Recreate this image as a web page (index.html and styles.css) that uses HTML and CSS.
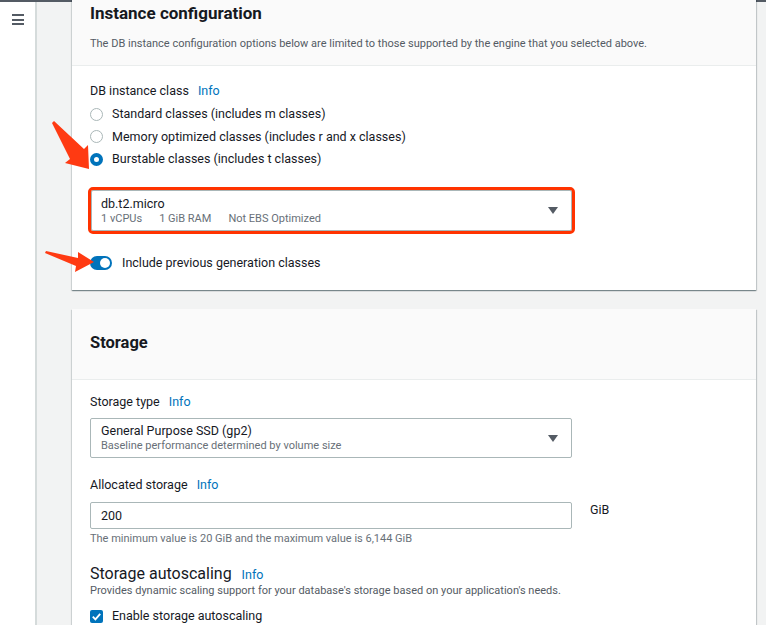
FILE: index.html
```html
<!DOCTYPE html>
<html>
<head>
<meta charset="utf-8">
<link rel="stylesheet" href="styles.css">
</head>
<body>
<div class="topline"></div>
<div class="layout">
  <aside class="sidebar">
    <div class="hamburger"><span></span><span></span><span></span></div>
  </aside>
  <main class="main">
    <section class="card first">
      <header class="card-header hdr1">
        <h2 class="card-title">Instance configuration</h2>
        <p class="card-desc">The DB instance configuration options below are limited to those supported by the engine that you selected above.</p>
      </header>
      <div class="card-body body1">
        <div class="label">DB instance class <a class="info">Info</a></div>
        <div class="radios">
          <label class="radio"><span class="rdot"></span>Standard classes (includes m classes)</label>
          <label class="radio"><span class="rdot"></span>Memory optimized classes (includes r and x classes)</label>
          <label class="radio"><span class="rdot on"></span>Burstable classes (includes t classes)</label>
        </div>
        <div class="select highlighted">
          <div class="sel-text">
            <div class="sel-main">db.t2.micro</div>
            <div class="sel-sub"><span>1 vCPUs</span><span>1 GiB RAM</span><span>Not EBS Optimized</span></div>
          </div>
          <span class="caret"></span>
        </div>
        <div class="toggle-row">
          <span class="toggle"><span class="knob"></span></span>
          <span>Include previous generation classes</span>
        </div>
      </div>
    </section>

    <section class="card second">
      <header class="card-header hdr2">
        <h2 class="card-title t2">Storage</h2>
      </header>
      <div class="card-body body2">
        <div class="label">Storage type <a class="info">Info</a></div>
        <div class="select plain">
          <div class="sel-text">
            <div class="sel-main">General Purpose SSD (gp2)</div>
            <div class="sel-sub">Baseline performance determined by volume size</div>
          </div>
          <span class="caret"></span>
        </div>
        <div class="label lbl-alloc">Allocated storage <a class="info">Info</a></div>
        <div class="input-row">
          <div class="input">200</div>
          <span class="unit">GiB</span>
        </div>
        <div class="hint">The minimum value is 20 GiB and the maximum value is 6,144 GiB</div>
        <div class="subhead">Storage autoscaling <a class="info">Info</a></div>
        <div class="hint dark">Provides dynamic scaling support for your database's storage based on your application's needs.</div>
        <label class="check-row"><span class="checkbox"><svg viewBox="0 0 14 14" width="13" height="13"><path d="M3 7.2 L5.8 10 L11 4.2" fill="none" stroke="#fff" stroke-width="2"/></svg></span>Enable storage autoscaling</label>
      </div>
    </section>
  </main>
</div>

<svg class="arrow arrow1" width="50" height="50" viewBox="0 0 50 50">
  <path d="M1 3 L3 1 L33 29 L37 25 L38 49 L14 43 L19 39 Z" fill="#ff3a12"/>
</svg>
<svg class="arrow arrow2" width="50" height="24" viewBox="0 0 50 24">
  <path d="M0 3 L1 1 L33 8 L33 2 L49 12 L30 22 L31 16 Z" fill="#ff3a12"/>
</svg>
</body>
</html>
```

FILE: styles.css
```css
* { box-sizing: border-box; }
html, body { margin: 0; padding: 0; }
body {
  width: 766px;
  height: 625px;
  overflow: hidden;
  font-family: Roboto, "Liberation Sans", sans-serif;
  color: #16191f;
  font-size: 12.5px;
  background: #f2f3f3;
  position: relative;
}
.topline { height: 2px; background: #545b64; }
.layout { display: flex; height: 623px; }
.sidebar {
  width: 37px;
  flex: none;
  background: #fff;
  border-right: 2px solid #d5dbdb;
  padding: 12px 0 0 12px;
}
.hamburger { display: flex; flex-direction: column; gap: 2.5px; width: 12px; }
.hamburger span { height: 2px; background: #545b64; display: block; }
.main {
  flex: 1;
  padding: 0 10px 0 35px;
  margin-top: -24px;
}
.card {
  background: #fff;
  box-shadow: 0 1px 1px 0 rgba(0,28,36,.35), 1px 1px 1px 0 rgba(0,28,36,.15), -1px 1px 1px 0 rgba(0,28,36,.1);
}
.card.second { margin-top: 19px; }
.card-header {
  background: #fafafa;
  border-bottom: 1px solid #eaeded;
  padding: 0 18px;
}
.hdr1 { padding-top: 24px; height: 88px; }
.hdr2 { padding-top: 23px; height: 71px; }
.card-title {
  margin: 0;
  font-size: 17px;
  font-weight: 700;
  line-height: 22px;
}
.card-title.t2 { font-size: 16.5px; }
.card-desc {
  margin: 12px 0 0;
  font-size: 11px;
  color: #545b64;
  line-height: 16px;
}
.card-body { padding: 0 18px; }
.body1 { padding-top: 17px; height: 224px; }
.body2 { padding-top: 14px; height: 260px; }
.label { line-height: 16px; }
.info { color: #0073bb; margin-left: 6px; text-decoration: none; }
.radios { display: flex; flex-direction: column; gap: 6.5px; margin-top: 7px; }
.radio { display: flex; align-items: center; gap: 9px; line-height: 16px; }
.rdot {
  width: 13px; height: 13px;
  border-radius: 50%;
  border: 1px solid #aab7b8;
  background: #fff;
  flex: none;
}
.rdot.on { border: 4px solid #0073bb; }
.select {
  width: 482px;
  height: 40px;
  border: 1px solid #aab7b8;
  border-radius: 2px;
  display: flex;
  align-items: center;
  padding: 0 13px 0 10px;
  justify-content: space-between;
}
.select.highlighted {
  margin-top: 23px;
  margin-left: 1px;
  width: 481px;
  height: 41px;
  padding-left: 9px;
  outline: 3.5px solid #ff3300;
}
.select.plain { margin-top: 8px; }
.sel-main { line-height: 16px; }
.sel-sub { font-size: 11px; color: #687078; line-height: 14px; }
.sel-sub span { margin-right: 17px; }
.caret {
  width: 0; height: 0;
  border-left: 5px solid transparent;
  border-right: 5px solid transparent;
  border-top: 7px solid #545b64;
}
.toggle-row { display: flex; align-items: center; gap: 10px; margin-top: 24px; line-height: 16px; }
.toggle {
  width: 22px; height: 14px;
  border-radius: 7px;
  background: #0073bb;
  position: relative;
  flex: none;
}
.knob {
  position: absolute;
  right: 2px; top: 2px;
  width: 10px; height: 10px;
  border-radius: 50%;
  background: #fff;
}
.lbl-alloc { margin-top: 19px; }
.input-row { display: flex; align-items: flex-start; gap: 18px; margin-top: 9px; }
.input {
  width: 482px;
  height: 27px;
  border: 1px solid #aab7b8;
  border-radius: 2px;
  padding: 0 10px;
  line-height: 25px;
}
.unit { line-height: 16px; }
.hint { font-size: 11px; color: #687078; line-height: 14px; margin-top: 3px; }
.subhead { font-size: 16px; line-height: 20px; margin-top: 18px; }
.subhead .info { font-size: 12.5px; }
.hint.dark { margin-top: -1px; color: #545b64; }
.check-row { display: flex; align-items: center; gap: 9px; margin-top: 10px; line-height: 16px; }
.checkbox {
  width: 13px; height: 13px;
  background: #0073bb;
  border-radius: 2px;
  display: flex;
  flex: none;
}
.arrow { position: absolute; }
.arrow1 { left: 51px; top: 120px; }
.arrow2 { left: 45px; top: 250px; }
```
